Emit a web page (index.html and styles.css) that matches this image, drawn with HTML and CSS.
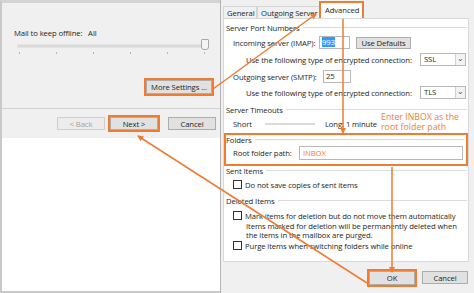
FILE: index.html
```html
<!DOCTYPE html>
<html lang="en">
<head>
    <meta charset="UTF-8">
    <title>Outlook Account Settings</title>
    <link rel="stylesheet" href="styles.css">
</head>
<body>
    <div class="screen">
        <div class="wizard">
            <div class="wizard-top">
                <div class="offline-label">Mail to keep offline:&nbsp;&nbsp;&nbsp;All</div>
                <div class="slider">
                    <div class="slider-track"></div>
                    <div class="slider-thumb"></div>
                    <div class="ticks">
                        <span></span><span></span><span></span><span></span><span></span><span></span>
                    </div>
                </div>
                <div class="more-row">
                    <div class="mark"><button class="btn more">More Settings ...</button></div>
                </div>
            </div>
            <div class="wizard-buttons">
                <button class="btn disabled">&lt; Back</button>
                <div class="mark"><button class="btn nav">Next &gt;</button></div>
                <button class="btn nav cancel-left">Cancel</button>
            </div>
            <div class="wizard-body"></div>
        </div>

        <div class="dialog">
            <div class="tabs">
                <div class="tab tab-general">General</div>
                <div class="tab tab-clip">Outgoing Server</div>
                <div class="tab active">Advanced</div>
            </div>
            <div class="pane">
                <div class="group first"><span>Server Port Numbers</span></div>
                <div class="row indent row-in">
                    <span class="lbl-port">Incoming server (IMAP):</span>
                    <span class="input port"><span class="sel">993</span></span>
                    <button class="btn defaults">Use Defaults</button>
                </div>
                <div class="row indent2 row-enc">
                    <span class="grow">Use the following type of encrypted connection:</span>
                    <span class="select">SSL<span class="arrow">&#8964;</span></span>
                </div>
                <div class="row indent row-out">
                    <span class="lbl-port">Outgoing server (SMTP):</span>
                    <span class="input port port-out">25</span>
                </div>
                <div class="row indent2 row-enc2">
                    <span class="grow">Use the following type of encrypted connection:</span>
                    <span class="select">TLS<span class="arrow">&#8964;</span></span>
                </div>
                <div class="group timeouts"><span>Server Timeouts</span></div>
                <div class="row indent row-short">
                    <span>Short</span>
                    <span class="mini-slider"></span>
                    <span>Long: 1 minute</span>
                </div>
                <div class="folders">
                    <div class="group"><span>Folders</span></div>
                    <div class="row indent row-root">
                        <span class="lbl-root">Root folder path:</span>
                        <span class="input root">INBOX</span>
                    </div>
                </div>
                <div class="group"><span>Sent Items</span></div>
                <div class="row indent check-row row-sent">
                    <span class="box"></span><span>Do not save copies of sent items</span>
                </div>
                <div class="group deleted"><span>Deleted Items</span></div>
                <div class="row indent check-row row-mark">
                    <span class="box"></span><span>Mark items for deletion but do not move them automatically</span>
                </div>
                <div class="note">Items marked for deletion will be permanently deleted when</div>
                <div class="note">the items in the mailbox are purged.</div>
                <div class="row indent check-row">
                    <span class="box"></span><span>Purge items when switching folders while online</span>
                </div>
            </div>
            <div class="dialog-buttons">
                <div class="mark"><button class="btn ok">OK</button></div>
                <button class="btn ok cancel">Cancel</button>
            </div>
        </div>

        <div class="hint">Enter INBOX as the<br>root folder path</div>

        <svg class="arrows" width="474" height="293" viewBox="0 0 474 293">
            <defs>
                <marker id="head" markerWidth="6" markerHeight="6" refX="5" refY="3" orient="auto" markerUnits="userSpaceOnUse">
                    <path d="M0,0 L6,3 L0,6 Z" fill="#ee7d31"/>
                </marker>
            </defs>
            <g stroke="#ee7d31" stroke-width="1.5" fill="none">
                <line x1="213" y1="89" x2="316" y2="14" marker-end="url(#head)"/>
                <line x1="343" y1="19" x2="343" y2="133" marker-end="url(#head)"/>
                <line x1="392" y1="167" x2="392" y2="272" marker-end="url(#head)"/>
                <line x1="367" y1="283" x2="138" y2="136" marker-end="url(#head)"/>
            </g>
        </svg>
    </div>
</body>
</html>
```

FILE: styles.css
```css
body {
    margin: 0;
    font-family: "Open Sans", "Noto Sans", sans-serif;
    font-size: 7.7px;
    letter-spacing: -0.1px;
    color: #1e1e1e;
}
.screen {
    position: relative;
    width: 474px;
    height: 293px;
    display: flex;
    overflow: hidden;
    background: #e9e9e9;
}

/* left wizard window */
.wizard {
    width: 218px;
    height: 288px;
    border-left: 2px solid #c9c9c9;
    border-top: 3px solid #d4d4d4;
    border-bottom: 2px solid #c9c9c9;
    display: flex;
    flex-direction: column;
    background: #f0f0f0;
}
.wizard-top {
    height: 105px;
    border-bottom: 1px solid #d2d2d2;
    position: relative;
}
.offline-label {
    margin: 25px 0 0 12px;
    line-height: 10px;
}
.slider {
    position: relative;
    margin: 4px 0 0 15px;
    width: 190px;
    height: 14px;
}
.slider-track {
    position: absolute;
    left: 0;
    right: 0;
    top: 2px;
    height: 2px;
    background: #dadada;
    border: 1px solid #e4e4e4;
}
.slider-thumb {
    position: absolute;
    left: 184px;
    top: -3px;
    width: 6px;
    height: 9px;
    background: #f4f4f4;
    border: 1px solid #a8a8a8;
    border-radius: 1px 1px 3px 3px;
}
.ticks {
    position: absolute;
    left: 2px;
    right: 2px;
    top: 10px;
    display: flex;
    justify-content: space-between;
}
.ticks span {
    width: 1px;
    height: 2px;
    background: #b8b8b8;
}
.more-row {
    display: flex;
    justify-content: flex-end;
    margin: 22px 6px 0 0;
}
.mark {
    border: 2px solid #ee7d31;
    display: flex;
}
.btn {
    font-family: inherit;
    font-size: 7.7px;
    letter-spacing: -0.1px;
    color: #1e1e1e;
    background: #e1e1e1;
    border: 1px solid #adadad;
    padding: 0;
    height: 14px;
    line-height: 12px;
}
.more {
    width: 66px;
}
.wizard-buttons {
    height: 29px;
    display: flex;
    align-items: center;
    padding-left: 55px;
}
.wizard-buttons .btn {
    width: 48px;
    height: 13px;
}
.disabled {
    color: #a3a3a3;
    background: #ececec;
    border-color: #d0d0d0;
    margin-right: 3px;
}
.cancel-left {
    margin-left: 8px;
}
.wizard-body {
    flex: 1;
    background: #fff;
}

/* right dialog */
.dialog {
    flex: 1;
    height: 293px;
    border-left: 1px solid #b4b4b4;
    background: #f0f0f0;
    padding: 0 5px 0 2px;
    display: flex;
    flex-direction: column;
}
.tabs {
    display: flex;
    align-items: flex-end;
    height: 18px;
}
.tab {
    height: 12px;
    line-height: 12px;
    padding: 0 3px;
    border: 1px solid #d6d6d6;
    border-bottom: none;
    background: #f0f0f0;
    white-space: nowrap;
    box-sizing: border-box;
}
.tab-general {
    width: 34px;
}
.tab-clip {
    width: 62px;
    overflow: hidden;
    border-right: none;
}
.active {
    height: 17px;
    line-height: 15px;
    background: #fff;
    border: 2px solid #ee7d31;
    border-bottom: none;
    padding: 0 4px;
    width: 45px;
}
.pane {
    height: 242px;
    background: #fff;
    border: 1px solid #d9d9d9;
    display: flex;
    flex-direction: column;
    padding: 4px 1px 0 2px;
}
.group {
    display: flex;
    align-items: center;
    height: 10px;
    line-height: 10px;
}
.group::after {
    content: "";
    flex: 1;
    height: 1px;
    background: #dcdcdc;
    margin-left: 3px;
}
.row {
    display: flex;
    align-items: center;
    white-space: nowrap;
}
.indent {
    padding-left: 7px;
}
.indent2 {
    padding-left: 20px;
    padding-right: 1px;
}
.grow {
    flex: 1;
}
.row-in {
    height: 14px;
    margin-top: 3px;
}
.row-enc {
    height: 14px;
    margin-top: 3px;
}
.row-out {
    height: 14px;
    margin-top: 3px;
}
.row-enc2 {
    height: 14px;
    margin-top: 2px;
}
.lbl-port {
    width: 86px;
}
.input {
    height: 11px;
    line-height: 11px;
    border: 1px solid #b8b8b8;
    background: #fff;
    padding: 0 2px;
}
.port {
    width: 25px;
}
.port-out {
    margin-left: 4px;
    width: 22px;
}
.sel {
    background: #3399ff;
    color: #fff;
}
.defaults {
    width: 55px;
    height: 12px;
    line-height: 10px;
    margin-left: 6px;
}
.select {
    position: relative;
    width: 41px;
    height: 11px;
    line-height: 11px;
    border: 1px solid #b8b8b8;
    padding-left: 3px;
}
.arrow {
    position: absolute;
    right: 0;
    top: 0;
    width: 9px;
    height: 11px;
    border-left: 1px solid #d0d0d0;
    background: #f2f2f2;
    line-height: 7px;
    text-align: center;
    font-size: 8px;
    color: #555;
}
.timeouts {
    margin-top: 5px;
}
.row-short {
    height: 12px;
    margin-top: 3px;
}
.mini-slider {
    width: 50px;
    height: 2px;
    background: #dadada;
    margin: 0 10px 0 13px;
}
.folders {
    margin: 3px -1px 0 0;
    height: 33px;
    border: 2px solid #ee7d31;
    padding: 0 2px 0 0;
    box-sizing: border-box;
    margin-left: -2px;
}
.folders .group {
    height: 8px;
    line-height: 8px;
    margin-top: 1px;
}
.row-root {
    height: 15px;
    margin-top: 2px;
}
.lbl-root {
    width: 66px;
}
.root {
    flex: 1;
    height: 12px;
    line-height: 12px;
    color: #ee7d31;
    padding-left: 3px;
    margin-right: 1px;
}
.check-row {
    height: 12px;
}
.row-sent {
    margin-top: 3px;
}
.deleted {
    margin-top: 5px;
}
.row-mark {
    margin-top: 4px;
}
.box {
    width: 7px;
    height: 7px;
    border: 1px solid #333;
    margin-right: 3px;
    background: #fff;
}
.note {
    padding-left: 20px;
    height: 9px;
    line-height: 9px;
    white-space: nowrap;
}
.dialog-buttons {
    display: flex;
    align-items: center;
    justify-content: flex-end;
    height: 31px;
    padding-right: 1px;
}
.ok {
    width: 46px;
    height: 14px;
}
.cancel {
    margin-left: 5px;
    height: 13px;
}

.hint {
    position: absolute;
    left: 381px;
    top: 112px;
    font-size: 8.8px;
    line-height: 10px;
    letter-spacing: 0;
    color: #ee7d31;
}
.arrows {
    position: absolute;
    left: 0;
    top: 0;
    pointer-events: none;
}
```
